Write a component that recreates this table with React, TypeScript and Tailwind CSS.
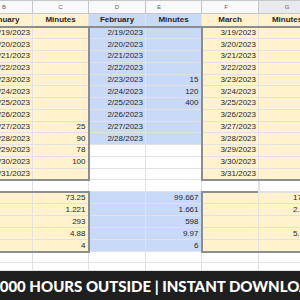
import React from "react";

const janMinutes: Record<number, string> = { 8: "25", 9: "90", 10: "78", 11: "100" };
const febMinutes: Record<number, string> = { 4: "15", 5: "120", 6: "400" };

const stats = [
  { c: "73.25", e: "99.667", g: "176.5" },
  { c: "1.221", e: "1.661", g: "2.941" },
  { c: "293", e: "598", g: "" },
  { c: "4.88", e: "9.97", g: "5.867" },
  { c: "4", e: "6", g: "" },
];

const cell = "border border-[#e1e1e1] px-[2px] text-right whitespace-nowrap overflow-hidden leading-none";

export default function App() {
  return (
    <div className="w-[300px] h-[300px] overflow-hidden bg-white font-['Liberation_Sans',Arial,sans-serif] text-[#1f1f1f]">
      <div className="-ml-[25px] w-[340px]">
        <table className="table-fixed border-collapse w-[340px] text-[8px]">
          <colgroup>
            <col className="w-[57px]" />
            <col className="w-[56px]" />
            <col className="w-[57px]" />
            <col className="w-[56px]" />
            <col className="w-[57px]" />
            <col className="w-[57px]" />
          </colgroup>
          <tbody>
            {/* column letters */}
            <tr className="h-[13px] text-[6px] text-[#5f6368]">
              <td className="border border-[#c7c7c7] bg-[#f8f9fa] text-center">B</td>
              <td className="border border-[#c7c7c7] bg-[#f8f9fa] text-center">C</td>
              <td className="border border-[#c7c7c7] bg-[#f8f9fa] text-center">D</td>
              <td className="border border-[#c7c7c7] bg-[#f8f9fa] text-left pl-[11px]">E</td>
              <td className="border border-[#c7c7c7] bg-[#f8f9fa] text-center pr-[8px]">F</td>
              <td className="border border-[#c7c7c7] bg-[#e8eaed] text-center">G</td>
            </tr>

            {/* header */}
            <tr className="h-[13px] font-bold">
              <td className="border border-[#e1e1e1] border-b-2 border-b-[#8d8d8d] bg-[#fff2cc] text-center">January</td>
              <td className="border border-[#e1e1e1] border-b-2 border-b-[#8d8d8d] bg-[#fff2cc] text-center">Minutes</td>
              <td className="border border-[#e1e1e1] border-b-2 border-b-[#8d8d8d] bg-[#c9daf8] text-center">February</td>
              <td className="border border-[#e1e1e1] border-b-2 border-b-[#8d8d8d] bg-[#c9daf8] text-center">Minutes</td>
              <td className="border border-[#e1e1e1] border-b-2 border-b-[#8d8d8d] bg-[#fff2cc] text-center">March</td>
              <td className="border border-[#e1e1e1] border-b-2 border-b-[#8d8d8d] bg-[#fff2cc] text-center">Minutes</td>
            </tr>

            {/* daily rows */}
            {Array.from({ length: 13 }).map((_, i) => {
              const last = i === 12;
              const blue = i < 10;
              return (
                <tr key={i} className="h-[11.75px]">
                  <td className={`${cell} bg-[#fff2cc] ${last ? "border-b-2 border-b-[#8d8d8d]" : ""}`}>1/{19 + i}/2023</td>
                  <td className={`${cell} bg-[#fff2cc] border-r-2 border-r-[#8d8d8d] ${last ? "border-b-2 border-b-[#8d8d8d]" : ""}`}>
                    {janMinutes[i] ?? ""}
                  </td>
                  <td className={`${cell} ${blue ? "bg-[#c9daf8]" : "bg-white"}`}>{blue ? `2/${19 + i}/2023` : ""}</td>
                  <td className={`${cell} ${blue ? "bg-[#c9daf8]" : "bg-white"}`}>{febMinutes[i] ?? ""}</td>
                  <td className={`${cell} bg-[#fff2cc] border-l-2 border-l-[#8d8d8d] ${last ? "border-b-2 border-b-[#8d8d8d]" : ""}`}>
                    3/{19 + i}/2023
                  </td>
                  <td className={`${cell} bg-[#fff2cc] ${last ? "border-b-2 border-b-[#8d8d8d]" : ""}`}></td>
                </tr>
              );
            })}

            {/* blank row with selected cell */}
            <tr className="h-[12px]">
              <td className={cell}></td>
              <td className={cell}></td>
              <td className={cell}></td>
              <td className={cell}></td>
              <td className={cell}></td>
              <td className={`${cell} border-2 border-[#1a73e8]`}></td>
            </tr>

            {/* summary */}
            {stats.map((s, j) => {
              const first = j === 0;
              const last = j === stats.length - 1;
              const yEdge = `${first ? "border-t-2 border-t-[#8d8d8d]" : ""} ${last ? "border-b-2 border-b-[#8d8d8d]" : ""}`;
              return (
                <tr key={j} className="h-[12px]">
                  <td className={`${cell} bg-[#fff2cc] ${yEdge}`}></td>
                  <td className={`${cell} bg-[#fff2cc] border-r-2 border-r-[#8d8d8d] ${yEdge}`}>{s.c}</td>
                  <td className={`${cell} bg-[#c9daf8]`}></td>
                  <td className={`${cell} bg-[#c9daf8]`}>{s.e}</td>
                  <td className={`${cell} bg-[#fff2cc] border-l-2 border-l-[#8d8d8d] ${yEdge}`}></td>
                  <td className={`${cell} bg-[#fff2cc] ${yEdge}`}>{s.g}</td>
                </tr>
              );
            })}

            <tr className="h-[11px]">
              {Array.from({ length: 6 }).map((_, k) => (
                <td key={k} className={cell}></td>
              ))}
            </tr>
            <tr className="h-[8px]">
              {Array.from({ length: 6 }).map((_, k) => (
                <td key={k} className={cell}></td>
              ))}
            </tr>
          </tbody>
        </table>
      </div>

      {/* promo banner */}
      <div className="h-[30px] bg-[#1f1f1f] flex items-center overflow-hidden">
        <span className="-ml-[9px] whitespace-nowrap text-white font-black text-[15px] tracking-[0px] font-['Lato',sans-serif]">
          1000 HOURS OUTSIDE | INSTANT DOWNLOAD
        </span>
      </div>
    </div>
  );
}
